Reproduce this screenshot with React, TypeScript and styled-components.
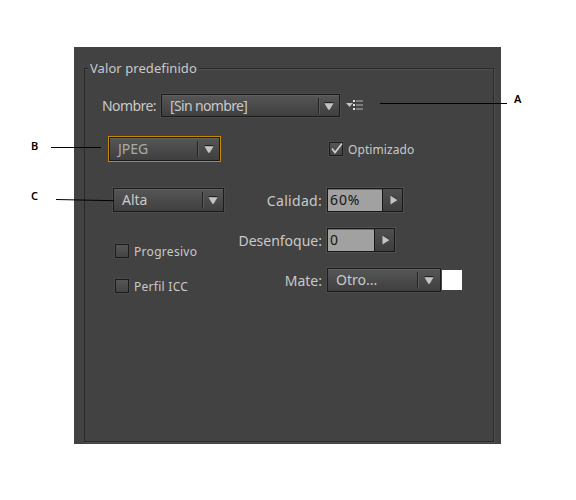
import React from "react";
import styled, { createGlobalStyle } from "styled-components";

const Global = createGlobalStyle`
  *, *::before, *::after { box-sizing: border-box; }
  body { margin: 0; background: #fff; font-family: "Noto Sans", "Open Sans", sans-serif; }
`;

const Page = styled.main`
  position: relative;
  width: 576px;
  height: 500px;
  padding: 47px 75px 56px 74px;
  overflow: hidden;
`;

const Panel = styled.section`
  width: 427px;
  height: 397px;
  padding: 21px 7px 2px 10px;
  background: #424242;
`;

const Group = styled.div`
  width: 410px;
  height: 374px;
  border: 1px solid #292929;
  box-shadow: 1px 1px 0 #505050, inset 0 1px 0 #505050;
  display: flex;
  flex-direction: column;
`;

const Text = styled.span<{ $size?: number; $track?: number; $color?: string }>`
  font-size: ${(p) => p.$size ?? 13}px;
  letter-spacing: ${(p) => p.$track ?? 0}px;
  color: ${(p) => p.$color ?? "#c9c9c9"};
  line-height: 18px;
  white-space: nowrap;
`;

const Legend = styled.div`
  width: fit-content;
  height: 18px;
  margin: -10px 0 0 3px;
  padding: 0 2px;
  background: #424242;
  display: flex;
  z-index: 1;
`;

const NameRow = styled.div`
  display: flex;
  align-items: center;
  height: 23px;
  margin-top: 17px;
  padding-left: 16px;
`;

const Columns = styled.div`
  display: grid;
  grid-template-columns: 130px 1fr;
  margin-top: 19px;
`;

const Column = styled.div`
  display: flex;
  flex-direction: column;
`;

const Field = styled.div<{ $left?: number; $top?: number; $height?: number }>`
  display: flex;
  align-items: center;
  height: ${(p) => p.$height ?? 24}px;
  margin-top: ${(p) => p.$top ?? 0}px;
  padding-left: ${(p) => p.$left ?? 0}px;
`;

const Label = styled.div<{ $width: number; $drop?: number }>`
  width: ${(p) => p.$width}px;
  flex: none;
  display: flex;
  justify-content: flex-end;
  margin-right: 5px;
  padding-top: ${(p) => p.$drop ?? 0}px;
`;

const SelectBox = styled.div<{ $width: number; $height?: number; $focus?: boolean }>`
  width: ${(p) => p.$width}px;
  height: ${(p) => p.$height ?? 24}px;
  flex: none;
  display: flex;
  align-items: center;
  border: 1px solid #1b1b1b;
  background: linear-gradient(#565656, #3f3f3f);
  box-shadow: ${(p) =>
    p.$focus ? "0 0 0 1px #c48a04" : "0 0 0 1px #4b4b4b"}, inset 0 1px 0 #606060;
  padding-left: 8px;
`;

const ArrowCell = styled.div<{ $width?: number }>`
  width: ${(p) => p.$width ?? 21}px;
  height: 16px;
  margin-left: auto;
  border-left: 1px solid #242424;
  box-shadow: inset 1px 0 0 #5a5a5a;
  display: flex;
  align-items: center;
  justify-content: center;
`;

const NumberBox = styled.div<{ $width: number }>`
  width: ${(p) => p.$width}px;
  height: 24px;
  flex: none;
  display: flex;
  border: 1px solid #171717;
  box-shadow: 0 0 0 1px #505050;
  background: #a1a1a1;
`;

const NumberValue = styled.div`
  flex: 1;
  display: flex;
  align-items: center;
  padding: 0 0 2px 2px;
  border-top: 1px solid #6f6f6f;
`;

const Stepper = styled.div`
  width: 20px;
  border-left: 1px solid #171717;
  background: linear-gradient(#505050, #3e3e3e);
  display: flex;
  align-items: center;
  justify-content: center;
  padding-left: 2px;
`;

const CheckBox = styled.div`
  width: 14px;
  height: 14px;
  flex: none;
  margin-right: 5px;
  border: 1px solid #1b1b1b;
  background: linear-gradient(#565656, #444);
  box-shadow: 0 0 0 1px #4a4a4a;
`;

const CheckLabel = styled.div`
  display: flex;
  padding-top: 1px;
`;

const Swatch = styled.div`
  width: 20px;
  height: 20px;
  margin-left: 1px;
  background: #fff;
`;

const MenuSvg = styled.svg`
  display: block;
  margin: -2px 0 0 6px;
`;

const CheckSvg = styled.svg`
  display: block;
  overflow: visible;
`;

const Callout = styled.svg`
  position: absolute;
  inset: 0;
`;

const Mark = styled.b<{ $x: number; $y: number }>`
  position: absolute;
  left: ${(p) => p.$x}px;
  top: ${(p) => p.$y}px;
  font-size: 11px;
  font-weight: 600;
  line-height: 14px;
  color: #000;
`;

const DownArrow = () => (
  <svg width="10" height="8" viewBox="0 0 10 8">
    <path d="M0.5 0H9.5V1.2H0.5Z" fill="#222" />
    <path d="M0.5 1.2H9.5L5.7 7.8H4.3Z" fill="#c4c4c4" />
  </svg>
);

const RightArrow = () => (
  <svg width="8" height="10" viewBox="0 0 8 10">
    <path d="M0.5 0.5L7.5 5L0.5 9.5Z" fill="#c4c4c4" />
    <path d="M0.5 0.2L7.5 4.6" stroke="#2a2a2a" strokeWidth="0.6" />
  </svg>
);

type SelectProps = {
  value: string;
  width: number;
  height?: number;
  cell?: number;
  focus?: boolean;
  track?: number;
  color?: string;
};

const Select = ({ value, width, height, cell, focus, track, color }: SelectProps) => (
  <SelectBox $width={width} $height={height} $focus={focus}>
    <Text $size={14} $track={track} $color={color}>{value}</Text>
    <ArrowCell $width={cell}><DownArrow /></ArrowCell>
  </SelectBox>
);

const NumberInput = ({ value, width }: { value: string; width: number }) => (
  <NumberBox $width={width}>
    <NumberValue><Text $size={14} $track={0.9} $color="#141414">{value}</Text></NumberValue>
    <Stepper><RightArrow /></Stepper>
  </NumberBox>
);

const Check = ({ label, checked, track }: { label: string; checked?: boolean; track?: number }) => (
  <>
    <CheckBox>
      {checked && (
        <CheckSvg width="12" height="12" viewBox="0 0 12 12">
          <path d="M2 5.5L5 9.5L12 0.5" fill="none" stroke="#cecece" strokeWidth="1.7" />
        </CheckSvg>
      )}
    </CheckBox>
    <CheckLabel><Text $size={12} $track={track}>{label}</Text></CheckLabel>
  </>
);

export default function App() {
  return (
    <Page>
      <Global />
      <Panel>
        <Group>
          <Legend><Text $size={13} $track={0.07}>Valor predefinido</Text></Legend>
          <NameRow>
            <Label $width={55}><Text $size={14} $track={-0.55}>Nombre:</Text></Label>
            <Select value="[Sin nombre]" width={179} height={23} track={-0.65} />
            <MenuSvg width="18" height="12" viewBox="0 0 18 12">
              <path d="M0 4H7L3.5 8Z" fill="#c2c2c2" />
              <path d="M7 1H9V3H7ZM7 5H9V7H7ZM7 9H9V11H7Z" fill="#e2e2e2" />
              <path d="M10 2H17M10 6H17M10 10H17" stroke="#b5b5b5" strokeWidth="1.2" />
            </MenuSvg>
          </NameRow>
          <Columns>
            <Column>
              <Field $left={24} $height={26}>
                <Select value="JPEG" width={111} cell={22} focus color="#aaa" />
              </Field>
              <Field $left={28} $top={26}>
                <Select value="Alta" width={111} />
              </Field>
              <Field $left={30} $top={32} $height={14}><Check label="Progresivo" track={0.3} /></Field>
              <Field $left={30} $top={21} $height={14}><Check label="Perfil ICC" track={0.27} /></Field>
            </Column>
            <Column>
              <Field $left={114} $top={6} $height={14}><Check label="Optimizado" checked track={0.08} /></Field>
              <Field $top={32}>
                <Label $width={107} $drop={2}><Text $size={14} $track={0.3}>Calidad:</Text></Label>
                <NumberInput value="60%" width={76} />
              </Field>
              <Field $top={16}>
                <Label $width={107} $drop={2}><Text $size={14}>Desenfoque:</Text></Label>
                <NumberInput value="0" width={68} />
              </Field>
              <Field $top={16}>
                <Label $width={107} $drop={2}><Text $size={14}>Mate:</Text></Label>
                <Select value="Otro..." width={114} cell={23} />
                <Swatch />
              </Field>
            </Column>
          </Columns>
        </Group>
      </Panel>
      <Callout width="576" height="500" viewBox="0 0 576 500" stroke="#000" fill="none">
        <path d="M380 103.5H507" />
        <path d="M51 147.5H101" />
        <path d="M56 199.5L114 200.7" />
      </Callout>
      <Mark $x={514} $y={92}>A</Mark>
      <Mark $x={31} $y={139}>B</Mark>
      <Mark $x={31} $y={189}>C</Mark>
    </Page>
  );
}
